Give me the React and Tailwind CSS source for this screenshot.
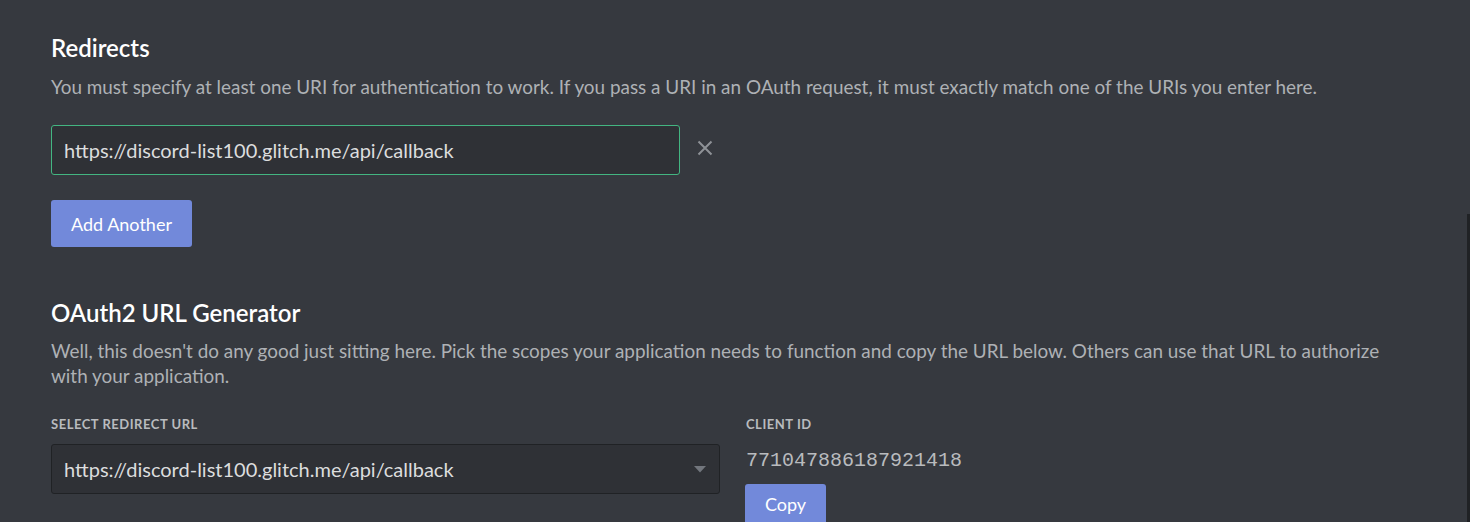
import React from "react";

export default function App() {
  const sans = { fontFamily: 'Lato, "Noto Sans", sans-serif' };
  return (
    <div className="relative w-[1470px] h-[522px] overflow-hidden bg-[#36393f]" style={sans}>
      <div className="pl-[51px] pr-[70px] pt-[33px]">
        <h2 className="text-[24px] leading-[30px] font-semibold text-white">Redirects</h2>
        <p className="mt-[11px] text-[18.9px] leading-[25px] text-[#aeb1b5]">
          You must specify at least one URI for authentication to work. If you pass a URI in an OAuth request, it must exactly match one of the URIs you enter here.
        </p>
        <div className="mt-[26px] flex items-center">
          <div className="w-[629px] h-[50px] rounded-[3px] border border-[#43b581] bg-[#2f3136] flex items-center px-[12px] text-[20px] text-[#dcddde]">
            https://discord-list100.glitch.me/api/callback
          </div>
          <svg className="ml-[17px] -mt-[4px]" width="16" height="16" viewBox="0 0 16 16">
            <path d="M1.5 1.5L14.5 14.5M14.5 1.5L1.5 14.5" stroke="#8e9297" strokeWidth="2" />
          </svg>
        </div>
        <button className="mt-[25px] w-[141px] h-[47px] rounded-[3px] bg-[#7289da] text-white text-[18px] leading-[22px]">
          Add Another
        </button>
        <h2 className="mt-[51px] text-[24px] leading-[30px] font-semibold text-white">OAuth2 URL Generator</h2>
        <p className="mt-[10px] text-[18.9px] leading-[25px] text-[#aeb1b5]">
          Well, this doesn't do any good just sitting here. Pick the scopes your application needs to function and copy the URL below. Others can use that URL to authorize with your application.
        </p>
        <div className="mt-[28px] flex">
          <div className="w-[669px]">
            <div className="text-[13px] leading-[16px] font-bold uppercase tracking-[0.04em] text-[#b9bbbe]">Select Redirect URL</div>
            <div className="mt-[12px] h-[50px] rounded-[3px] border border-[#202225] bg-[#2f3136] flex items-center justify-between pl-[12px] pr-[13px] text-[20px] text-[#dcddde]">
              <span>https://discord-list100.glitch.me/api/callback</span>
              <svg width="12" height="7" viewBox="0 0 12 7">
                <path d="M0 0H12L6 6.5Z" fill="#72767d" />
              </svg>
            </div>
          </div>
          <div className="ml-[26px]">
            <div className="text-[13px] leading-[16px] font-bold uppercase tracking-[0.04em] text-[#b9bbbe]">Client ID</div>
            <div className="mt-[17px] text-[20px] leading-[24px] text-[#b9bbbe]" style={{ fontFamily: '"Liberation Mono", monospace' }}>
              771047886187921418
            </div>
            <button className="mt-[11px] -ml-[1px] w-[81px] h-[40px] rounded-[3px] bg-[#7289da] text-white text-[18px] leading-[22px]">
              Copy
            </button>
          </div>
        </div>
      </div>
      <div className="absolute right-0 top-[214px] bottom-0 w-[3px] bg-[#202225]" />
    </div>
  );
}
